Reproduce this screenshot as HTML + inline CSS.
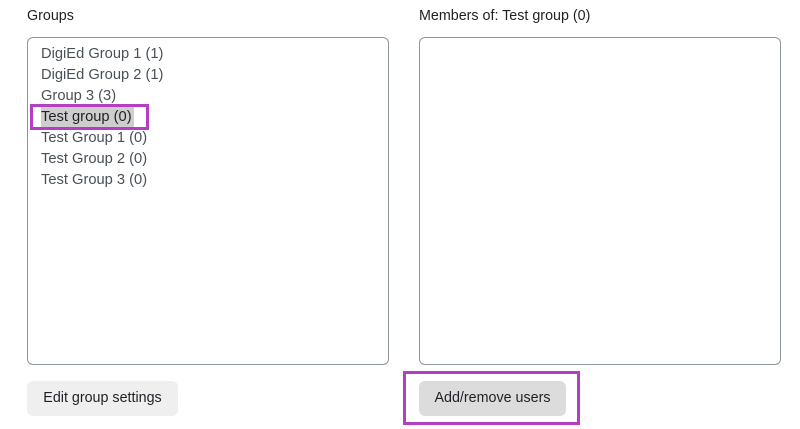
<!DOCTYPE html>
<html><head><style>
body{margin:0;width:800px;height:429px;background:#fff;font-family:"Liberation Sans",sans-serif;color:#1d2125;position:relative;overflow:hidden}
.lbl{position:absolute;top:8px;font-size:14.3px}
.box{position:absolute;top:37px;width:360px;height:326px;border:1px solid #8f959e;border-radius:6px}
.it{position:absolute;left:41px;font-size:14.7px;color:#495057;line-height:21px}
.btn{position:absolute;top:381px;height:35px;border-radius:6px;font-size:14.3px;line-height:35px;text-align:center;color:#1d2125}
.pb{position:absolute;border:3px solid #b43fc3;box-sizing:border-box}
</style></head><body>
<div class="lbl" style="left:27px">Groups</div>
<div class="lbl" style="left:419px">Members of: Test group (0)</div>
<div class="box" style="left:27px"></div>
<div class="box" style="left:419px"></div>
<div class="it" style="top:44px">DigiEd Group 1 (1)</div>
<div class="it" style="top:65px">DigiEd Group 2 (1)</div>
<div class="it" style="top:86px">Group 3 (3)</div>
<div class="it" style="top:107px;background:#cecece;color:#1d2125;padding-right:2px">Test group (0)</div>
<div class="it" style="top:128px">Test Group 1 (0)</div>
<div class="it" style="top:149px">Test Group 2 (0)</div>
<div class="it" style="top:170px">Test Group 3 (0)</div>
<div class="pb" style="left:30px;top:104px;width:119px;height:26px"></div>
<div class="btn" style="left:27px;width:151px;background:#efefef">Edit group settings</div>
<div class="btn" style="left:419px;width:147px;background:#dcdcdc">Add/remove users</div>
<div class="pb" style="left:403px;top:371px;width:177px;height:54px"></div>
</body></html>
